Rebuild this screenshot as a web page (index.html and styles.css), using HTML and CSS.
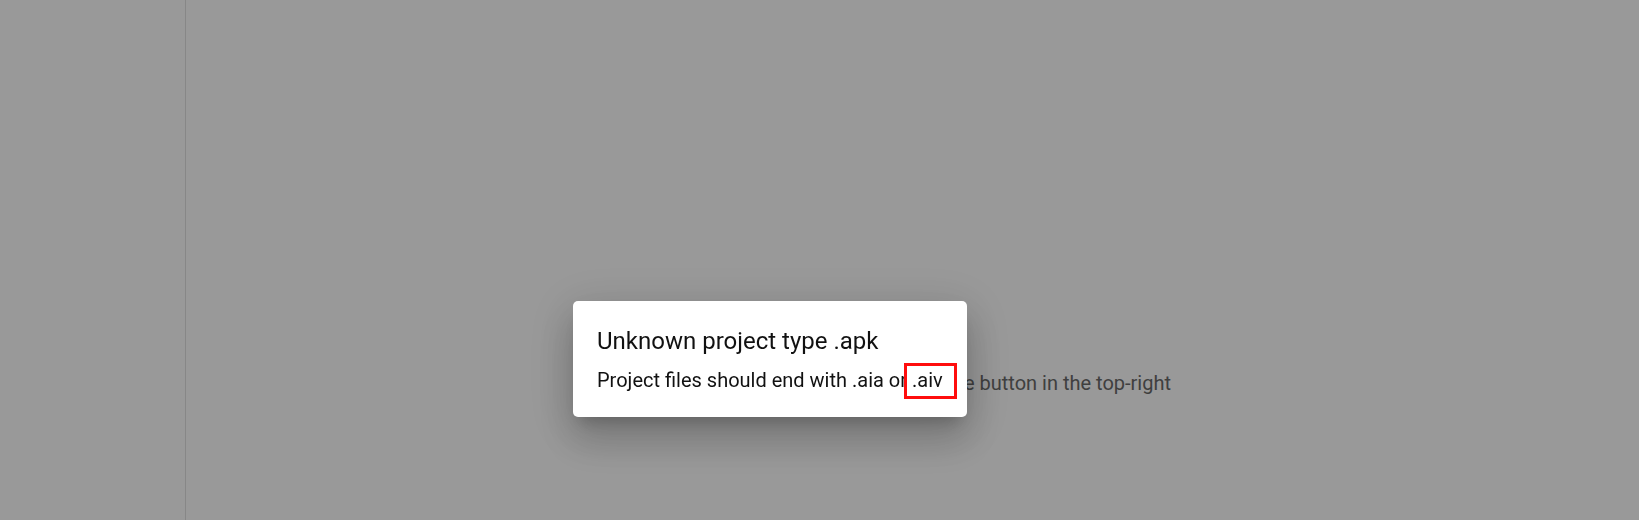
FILE: index.html
```html
<!DOCTYPE html>
<html lang="en">
<head>
<meta charset="utf-8">
<title>Projects</title>
<link rel="stylesheet" href="styles.css">
</head>
<body>
<div class="app">
  <aside class="sidebar"></aside>
  <main class="main">
    <p class="empty">You have no projects yet. Create one with the button in the top-right</p>
  </main>
</div>
<div class="backdrop">
  <div class="dialog" role="dialog">
    <h2 class="dialog-title">Unknown project type .apk</h2>
    <p class="dialog-text">Project files should end with .aia or <span class="mark">.aiv</span></p>
  </div>
</div>
</body>
</html>
```
FILE: styles.css
```css
html, body {
  margin: 0;
  padding: 0;
  height: 100%;
}
body {
  font-family: Roboto, "Liberation Sans", Arial, sans-serif;
  background: #ffffff;
  overflow: hidden;
}
.app {
  display: flex;
  height: 520px;
}
.sidebar {
  width: 185px;
  flex: none;
  border-right: 1px solid #e2e2e2;
}
.main {
  flex: 1;
  display: flex;
  justify-content: flex-end;
  padding-right: 468px;
  padding-top: 371px;
}
.empty {
  margin: 0;
  font-size: 20px;
  line-height: 24px;
  color: #6a6a6a;
  white-space: nowrap;
}
.backdrop {
  position: fixed;
  inset: 0;
  background: rgba(0, 0, 0, 0.4);
  display: flex;
  align-items: flex-start;
  padding-left: 573px;
  padding-top: 301px;
}
.dialog {
  width: 394px;
  box-sizing: border-box;
  background: #ffffff;
  border-radius: 5px;
  padding: 24px 24px 25px 24px;
  box-shadow: 0 11px 15px -7px rgba(0,0,0,0.2), 0 24px 38px 3px rgba(0,0,0,0.14), 0 9px 46px 8px rgba(0,0,0,0.12);
}
.dialog-title {
  margin: 0;
  font-size: 24px;
  line-height: 32px;
  font-weight: 400;
  color: #111111;
}
.dialog-text {
  margin: 11px 0 0 0;
  font-size: 20px;
  line-height: 24px;
  color: #111111;
  white-space: nowrap;
}
.mark {
  position: relative;
}
.mark::after {
  content: "";
  position: absolute;
  left: -8px;
  right: -14px;
  top: -5px;
  bottom: -7px;
  border: 3px solid #ff0d0d;
}
```
